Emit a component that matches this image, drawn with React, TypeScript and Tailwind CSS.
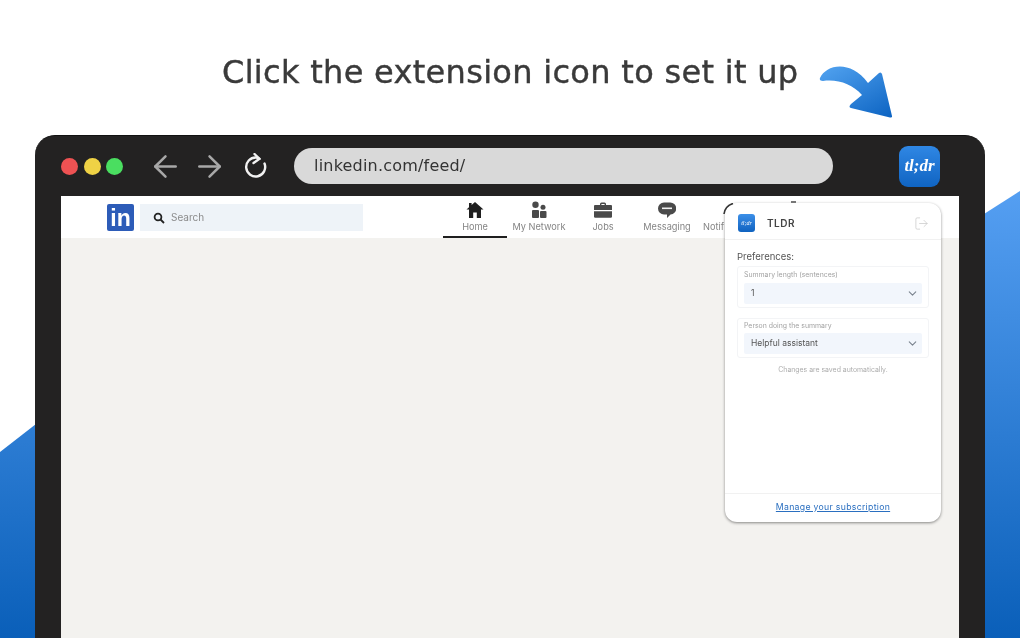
import { ArrowLeft, ArrowRight, ChevronDown, LogOut } from 'lucide-react'

const font = "font-['Inter',sans-serif]"

function Wedges() {
  return (
    <svg className="absolute inset-0" width="1020" height="638" viewBox="0 0 1020 638">
      <defs>
        <linearGradient id="wedge" gradientUnits="userSpaceOnUse" x1="0" y1="190" x2="0" y2="638">
          <stop offset="0" stopColor="#559ff2" />
          <stop offset="1" stopColor="#0a5fb9" />
        </linearGradient>
      </defs>
      <polygon points="0,452 36,424 36,638 0,638" fill="url(#wedge)" />
      <polygon points="984,214 1020,191 1020,638 984,638" fill="url(#wedge)" />
    </svg>
  )
}

function CurvedArrow() {
  return (
    <svg className="absolute left-[818px] top-[62px]" width="78" height="60" viewBox="0 0 78 60">
      <defs>
        <linearGradient id="arrow" x1="0.1" y1="0" x2="0.9" y2="1">
          <stop offset="0" stopColor="#4fa0ee" />
          <stop offset="1" stopColor="#0f66c4" />
        </linearGradient>
      </defs>
      <path
        d="M2 16 C 8 3 32 -3 50 21 L 61 11 Q 63 9.5 64 12 L 74 54 Q 74.5 56 72 55.5 L 33 46 Q 30 45 33 42 L 44 33 C 34 22 20 17 5 19 Q 1 19 2 16 Z"
        fill="url(#arrow)"
      />
    </svg>
  )
}

function HomeIcon() {
  return (
    <svg width="18" height="18" viewBox="0 0 18 18" fill="#1f1f1f">
      <path d="M9 1 L17.5 8.5 H15 V17 H10.8 V11.5 H7.2 V17 H3 V8.5 H.5 L3 6.2 V2 H5.6 V3.9 Z" />
    </svg>
  )
}

function NetworkIcon() {
  return (
    <svg width="18" height="18" viewBox="0 0 18 18" fill="#4a4a4a">
      <circle cx="5.5" cy="3.8" r="3.2" />
      <circle cx="13" cy="6.2" r="2.5" />
      <rect x="2" y="9" width="7" height="8" rx="1" />
      <rect x="10" y="10" width="6.5" height="7" rx="1" />
    </svg>
  )
}

function JobsIcon() {
  return (
    <svg width="18" height="18" viewBox="0 0 18 18" fill="#4a4a4a">
      <path d="M6 3 Q6 1.5 7.5 1.5 H10.5 Q12 1.5 12 3 V4 H17 Q18 4 18 5 V9 H0 V5 Q0 4 1 4 H6 Z M7.4 4 H10.6 V3 H7.4 Z" fillRule="evenodd" />
      <path d="M0 10.2 H18 V15.5 Q18 16.8 16.8 16.8 H1.2 Q0 16.8 0 15.5 Z" />
    </svg>
  )
}

function MessageIcon() {
  return (
    <svg width="18" height="18" viewBox="0 0 18 18" fill="#4a4a4a">
      <path d="M6 1.5 H12 A6 6 0 0 1 12.5 13.5 L9 17 V13.5 H6 A6 6 0 0 1 6 1.5 Z" />
      <rect x="4" y="6.5" width="10" height="1.6" fill="#f2f2f2" />
    </svg>
  )
}

function ReloadIcon() {
  return (
    <svg width="24" height="26" viewBox="0 0 24 26" fill="none" stroke="#f2f2f2" strokeWidth="2.4" strokeLinecap="round" strokeLinejoin="round">
      <path d="M20.5 10.5 A9.5 9.5 0 1 1 12 4.5 L15.5 5.8" />
      <path d="M10.5 1 L15.5 5.8 L9.5 10" />
    </svg>
  )
}

function NavItem({ label, icon, active }: { label: string; icon: React.ReactNode; active?: boolean }) {
  return (
    <div className={`flex flex-col items-center justify-end w-[64px] h-full pb-[2px] border-b-2 ${active ? 'border-[#1f1f1f]' : 'border-transparent'}`}>
      {icon}
      <span className="mt-[1px] text-[9.2px] leading-[14px] text-[#858585] whitespace-nowrap">{label}</span>
    </div>
  )
}

function SelectCard({ label, value, className, fieldClass }: { label: string; value: string; className?: string; fieldClass?: string }) {
  return (
    <div className={`border border-[#f3f4f6] rounded-[3px] px-[6px] pb-[3px] ${className ?? ''}`}>
      <div className="text-[6.9px] leading-[10px] text-[#a3a3a3] whitespace-nowrap">{label}</div>
      <div className={`h-[21px] bg-[#f2f6fc] rounded-[2px] flex items-center justify-between pl-[7px] pr-[3px] ${fieldClass ?? ''}`}>
        <span className="text-[8.5px] text-[#555]">{value}</span>
        <ChevronDown size={13} className="text-[#7a838e]" />
      </div>
    </div>
  )
}

function Popup() {
  return (
    <div className="absolute left-[664px] top-[7px] w-[216px] h-[319px] bg-white rounded-[12px] shadow-[0_1px_3px_rgba(0,0,0,0.45)] flex flex-col">
      {/* bits of the page's bell icon showing round the popup */}
      <svg className="absolute left-[-2px] top-0" width="14" height="14" viewBox="0 0 14 14" fill="none" stroke="#333" strokeWidth="1.6">
        <path d="M1 11 Q2 3 10 0.5" />
      </svg>
      <span className="absolute left-[66px] top-[-2px] w-[5px] h-[2px] bg-[#777]" />

      <div className="h-[37px] border-b border-[#f1f1f1] flex items-center pl-[13px] pr-[12px] pt-[4px]">
        <div className="w-[17px] h-[18px] rounded-[3px] bg-gradient-to-b from-[#3b8fe8] to-[#0e62c0] flex items-center justify-center">
          <span className="text-[6px] italic text-white font-['Liberation_Serif',serif]">tl;dr</span>
        </div>
        <span className="ml-[12px] text-[10px] font-semibold tracking-[0.5px] text-[#444]">TLDR</span>
        <LogOut size={15} strokeWidth={1.2} className="ml-auto text-[#c9c9c9]" />
      </div>
      <div className="flex-1 px-[12px] pt-[10px]">
        <div className="text-[9.5px] leading-[13px] text-[#555]">Preferences:</div>
        <SelectCard className="mt-[3px] pt-[3px]" fieldClass="mt-[3px]" label="Summary length (sentences)" value="1" />
        <SelectCard className="mt-[10px] pt-[2px]" fieldClass="mt-[2px]" label="Person doing the summary" value="Helpful assistant" />
        <div className="mt-[7px] text-center text-[6.9px] leading-[10px] text-[#adadad]">Changes are saved automatically.</div>
      </div>
      <div className="h-[29px] border-t border-[#f1f1f1] flex items-center justify-center pb-[1px]">
        <span className="text-[8.7px] tracking-[0.3px] underline text-[#2a6fc0]">Manage your subscription</span>
      </div>
    </div>
  )
}

export default function App() {
  return (
    <div className={`relative w-[1020px] h-[638px] overflow-hidden bg-white blur-[0.4px] ${font}`}>
      <Wedges />
      <CurvedArrow />

      <div className="relative h-[135px] pl-[222px] pt-[52px]">
        <h1 className="font-['DejaVu_Sans',sans-serif] text-[32px] leading-[40px] tracking-[0.3px] font-normal [-webkit-text-stroke:0.4px_#3a3a3a] text-[#3a3a3a] whitespace-nowrap">
          Click the extension icon to set it up
        </h1>
      </div>

      {/* Browser window */}
      <div className="relative mx-[35px] h-[503px] bg-[#232222] rounded-t-[20px] border-t border-[#111] px-[26px] flex flex-col">
        <div className="h-[60px] flex items-center">
          <div className="flex items-center gap-[5.5px]">
            <span className="w-[17px] h-[17px] rounded-full bg-[#ee5253]" />
            <span className="w-[17px] h-[17px] rounded-full bg-[#efd245]" />
            <span className="w-[17px] h-[17px] rounded-full bg-[#4ade60]" />
          </div>
          <ArrowLeft size={35} strokeWidth={1.7} className="ml-[25px] text-[#a8a8a8]" />
          <ArrowRight size={35} strokeWidth={1.7} className="ml-[9px] text-[#a8a8a8]" />
          <div className="ml-[17px] flex"><ReloadIcon /></div>
          <div className="ml-[26px] w-[539px] h-[36px] rounded-full bg-[#d9d9d9] flex items-center pl-[20px]">
            <span className="font-['DejaVu_Sans',sans-serif] text-[16px] tracking-[0.2px] text-[#333]">linkedin.com/feed/</span>
          </div>
          <div className="ml-[66px] w-[41px] h-[41px] rounded-[9px] bg-gradient-to-b from-[#2f87e4] to-[#0f64c2] flex items-center justify-center">
            <span className="text-[17px] font-bold italic text-white font-['Liberation_Serif',serif]">tl;dr</span>
          </div>
        </div>

        {/* Page */}
        <div className="relative flex-1 bg-[#f3f2ef] flex flex-col">
          <div className="h-[42px] bg-white flex">
            <div className="ml-[46px] mt-[8px] w-[27px] h-[27px] rounded-[2px] bg-[#2d5cb8] flex items-end justify-center">
              <span className="text-[23px] leading-[25px] font-bold text-white font-['Liberation_Sans',sans-serif]">in</span>
            </div>
            <div className="ml-[6px] mt-[8px] w-[223px] h-[27px] bg-[#eef3f8] flex items-center pl-[13px]">
              <svg width="12" height="12" viewBox="0 0 12 12" fill="none" stroke="#222" strokeWidth="1.8">
                <circle cx="5" cy="5" r="3.4" />
                <path d="M7.5 7.5 L11 11" />
              </svg>
              <span className="ml-[6px] text-[10px] text-[#8b8b8b]">Search</span>
            </div>
            <div className="ml-[80px] flex h-full">
              <NavItem label="Home" active icon={<HomeIcon />} />
              <NavItem label="My Network" icon={<NetworkIcon />} />
              <NavItem label="Jobs" icon={<JobsIcon />} />
              <NavItem label="Messaging" icon={<MessageIcon />} />
              <span className="ml-[4px] self-end pb-[4px] text-[9.2px] leading-[14px] text-[#858585]">Notif</span>
            </div>
          </div>
          <Popup />
        </div>
      </div>
    </div>
  )
}
